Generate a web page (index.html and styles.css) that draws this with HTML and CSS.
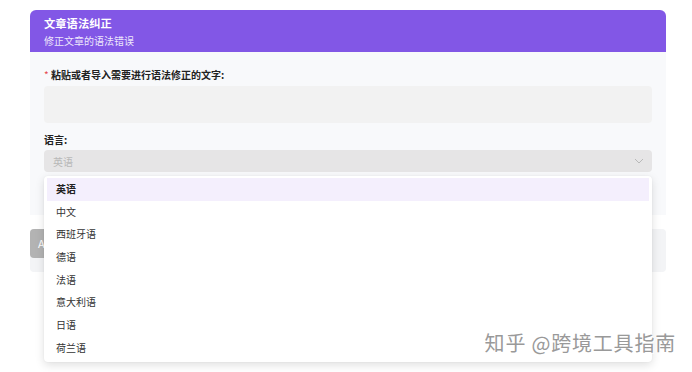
FILE: index.html
```html
<!DOCTYPE html>
<html lang="zh">
<head>
<meta charset="utf-8">
<link rel="stylesheet" href="styles.css">
</head>
<body>
<div class="page">
  <div class="card">
    <div class="card-head">
      <div class="title">文章语法纠正</div>
      <div class="sub">修正文章的语法错误</div>
    </div>
    <div class="card-body">
      <div class="label"><span class="req">*</span> 粘贴或者导入需要进行语法修正的文字:</div>
      <div class="textarea"></div>
      <div class="label lang">语言:</div>
      <div class="select-wrap">
        <div class="select">
          <span class="ph">英语</span>
          <svg class="chev" width="10" height="6" viewBox="0 0 10 6"><path d="M1 1l4 4 4-4" fill="none" stroke="#b9b9b9" stroke-width="1"/></svg>
        </div>
        <ul class="dropdown">
          <li class="item active">英语</li>
          <li class="item">中文</li>
          <li class="item">西班牙语</li>
          <li class="item">德语</li>
          <li class="item">法语</li>
          <li class="item">意大利语</li>
          <li class="item">日语</li>
          <li class="item">荷兰语</li>
        </ul>
      </div>
    </div>
  </div>
  <div class="actions">
    <div class="btn">A</div>
  </div>
  <div class="watermark">知乎 @跨境工具指南</div>
</div>
</body>
</html>
```

FILE: styles.css
```css
* { box-sizing: border-box; }
html, body { margin: 0; padding: 0; background: #ffffff; }
body {
  font-family: "Noto Sans CJK SC", "Noto Sans", sans-serif;
  color: #333;
  width: 692px;
  height: 372px;
  overflow: hidden;
}
.page {
  position: relative;
  padding: 10px 26px 0 30px;
  height: 372px;
}
.card {
  width: 636px;
  border-radius: 6px 6px 0 0;
  background: #f8f9fb;
}
.card-head {
  background: #8257e6;
  border-radius: 6px 6px 0 0;
  padding: 4px 14px 2px;
  height: 42px;
  color: #fff;
}
.title {
  font-size: 11.3px;
  font-weight: 700;
  line-height: 18px;
}
.sub {
  font-size: 10px;
  line-height: 18px;
  color: rgba(255,255,255,0.88);
}
.card-body {
  padding: 15px 14px 43px;
}
.label {
  font-size: 10px;
  font-weight: 700;
  line-height: 16px;
  color: #222;
}
.req { color: #e5484d; font-weight: 400; }
.textarea {
  margin-top: 3px;
  height: 37px;
  background: #f2f2f2;
  border-radius: 4px;
}
.lang { margin-top: 9px; }
.select-wrap { position: relative; margin-top: 2px; }
.select {
  height: 22px;
  background: #e6e5e6;
  border-radius: 4px;
  display: flex;
  align-items: center;
  justify-content: space-between;
  padding: 0 8px 0 9px;
}
.ph { font-size: 10px; color: #b8b8b8; }
.chev { display: block; }
.dropdown {
  position: absolute;
  top: 26px;
  left: 0;
  width: 608px;
  margin: 0;
  padding: 2px 3px 2px;
  list-style: none;
  background: #fff;
  border-radius: 4px;
  box-shadow: 0 3px 10px rgba(0,0,0,0.13), 0 0 2px rgba(0,0,0,0.06);
  z-index: 5;
}
.item {
  height: 22.7px;
  line-height: 22.7px;
  padding-left: 9px;
  font-size: 10px;
  color: #333;
}
.item.active {
  background: #f4effd;
  font-weight: 700;
  color: #222;
}
.actions {
  margin-top: 14px;
  width: 636px;
  height: 43px;
  background: #f3f4f6;
  border-radius: 4px;
}
.btn {
  width: 90px;
  height: 29px;
  background: #b3b3b3;
  border-radius: 4px;
  color: #fff;
  font-size: 11px;
  line-height: 29px;
  padding-left: 8px;
}
.watermark {
  position: absolute;
  right: 16px;
  top: 329px;
  font-size: 20px;
  line-height: 28px;
  color: #999999;
  text-shadow: 0 0 2px #fff, 0 0 2px #fff, 1px 1px 0 #fff;
  z-index: 10;
  letter-spacing: 0.8px;
}
```
